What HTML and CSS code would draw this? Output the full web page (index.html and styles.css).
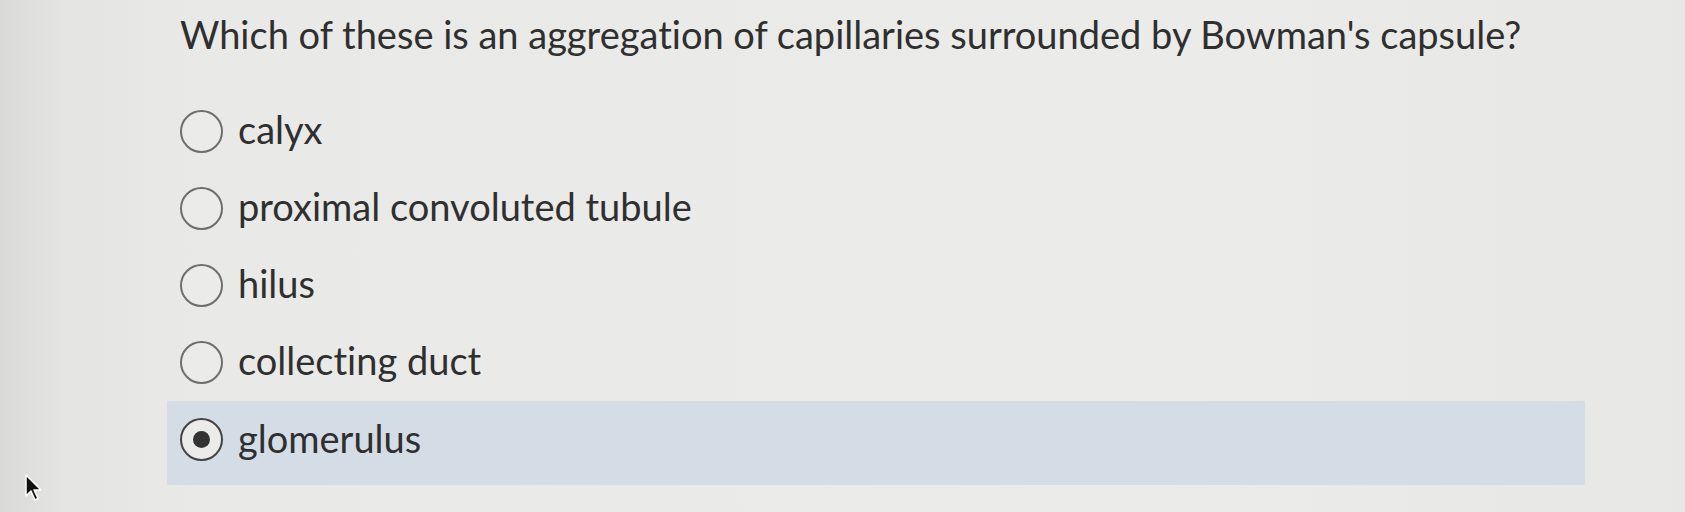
FILE: index.html
```html
<!DOCTYPE html>
<html lang="en">
<head>
<meta charset="utf-8">
<title>Question</title>
<link rel="stylesheet" href="styles.css">
</head>
<body>
<main class="screen">
  <h1 class="question">Which of these is an aggregation of capillaries surrounded by Bowman's capsule?</h1>
  <ul class="options">
    <li class="option"><span class="radio"></span><span class="label">calyx</span></li>
    <li class="option"><span class="radio"></span><span class="label">proximal convoluted tubule</span></li>
    <li class="option"><span class="radio"></span><span class="label">hilus</span></li>
    <li class="option"><span class="radio"></span><span class="label">collecting duct</span></li>
    <li class="option selected"><span class="radio checked"></span><span class="label">glomerulus</span></li>
  </ul>
  <svg class="cursor" width="20" height="28" viewBox="0 0 20 28">
    <path d="M2 1 L2 22 L7 17 L11 26 L14 24.5 L10 16 L17 16 Z" fill="#111" stroke="#fff" stroke-width="1.5" stroke-linejoin="round"/>
  </svg>
</main>
</body>
</html>
```
FILE: styles.css
```css
html, body {
  margin: 0;
  padding: 0;
}
body {
  width: 1685px;
  height: 512px;
  overflow: hidden;
  background: #e7e7e5;
  font-family: Lato, "Open Sans", sans-serif;
  color: #2f2f2f;
  font-variant-ligatures: none;
}
.screen {
  position: relative;
  height: 512px;
  box-sizing: border-box;
  padding: 13px 0 0 167px;
  background: linear-gradient(90deg, #d9d9d7 0px, #e4e4e2 60px, #e9e9e7 200px, #ebebe9 1200px, #e7e7e5 1685px);
}
.question {
  margin: 0 0 0 13px;
  font-size: 38px;
  font-weight: 400;
  line-height: 43px;
  color: #2f2f2f;
}
.options {
  list-style: none;
  margin: 37px 0 0 0;
  padding: 0;
  width: 1418px;
}
.option {
  display: flex;
  align-items: center;
  height: 77px;
  padding-left: 13px;
  gap: 15px;
  font-size: 38px;
}
.option.selected {
  background: #d4dde5;
  height: 84px;
  align-items: flex-start;
  padding-top: 2px;
  box-sizing: border-box;
}
.radio {
  width: 39px;
  height: 39px;
  border: 2px solid #6e6e6e;
  border-radius: 50%;
  background: #ebebea;
  box-sizing: content-box;
  display: flex;
  align-items: center;
  justify-content: center;
  flex: none;
}
.radio.checked {
  border-color: #444;
  margin-top: 15px;
}
.radio.checked::after {
  content: "";
  width: 17px;
  height: 17px;
  border-radius: 50%;
  background: #333;
}
.label {
  line-height: 43px;
  padding-bottom: 4px;
}
.option.selected .label {
  margin-top: 14px;
}
.cursor {
  position: absolute;
  left: 24px;
  top: 474px;
}
```
